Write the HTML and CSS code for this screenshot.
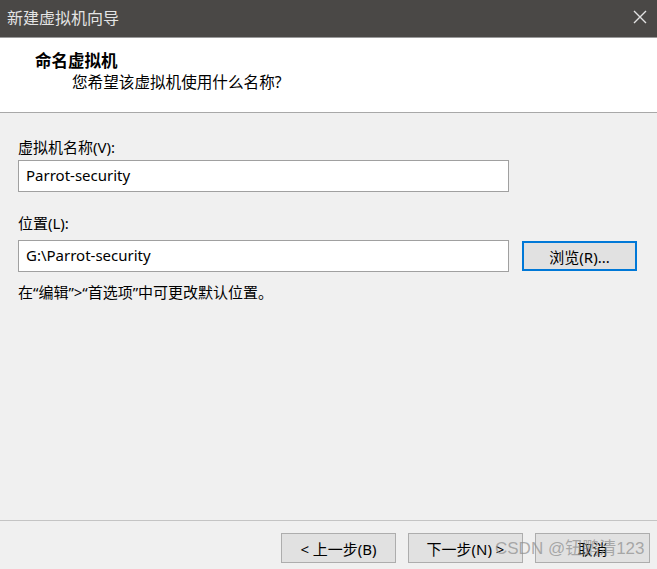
FILE: index.html
```html
<!DOCTYPE html>
<html lang="zh-CN">
<head>
<meta charset="utf-8">
<title>新建虚拟机向导</title>
<link rel="stylesheet" href="styles.css">
</head>
<body>
<div class="window">
  <div class="titlebar">
    <span class="title">新建虚拟机向导</span>
    <svg class="close" width="14" height="14" viewBox="0 0 14 14"><path d="M1 1 L13 13 M13 1 L1 13" stroke="#e2e2e2" stroke-width="1.4" fill="none"/></svg>
  </div>
  <div class="header">
    <div class="h-title">命名虚拟机</div>
    <div class="h-sub">您希望该虚拟机使用什么名称?</div>
  </div>
  <div class="main">
    <div class="label">虚拟机名称(V):</div>
    <div class="row">
      <div class="input">Parrot-security</div>
    </div>
    <div class="label label2">位置(L):</div>
    <div class="row">
      <div class="input">G:\Parrot-security</div>
      <div class="btn browse">浏览(R)...</div>
    </div>
    <div class="note">在“编辑”&gt;“首选项”中可更改默认位置。</div>
  </div>
  <div class="footer">
    <div class="btn">&lt; 上一步(B)</div>
    <div class="btn">下一步(N) &gt;</div>
    <div class="btn">取消</div>
  </div>
  <div class="watermark">CSDN @钮鹏清123</div>
</div>
</body>
</html>
```
FILE: styles.css
```css
* { box-sizing: border-box; }
html, body { margin: 0; padding: 0; }
body {
  width: 657px;
  height: 569px;
  overflow: hidden;
  background: #f0f0f0;
  font-family: "Noto Sans", "Noto Sans CJK SC", sans-serif;
  color: #000;
}
.window {
  position: relative;
  display: flex;
  flex-direction: column;
  height: 569px;
}
.titlebar {
  height: 38px;
  background: #4a4846;
  display: flex;
  align-items: center;
  justify-content: space-between;
  padding: 0 10px 0 7px;
  color: #e4e4e4;
  font-size: 16px;
  border-bottom: 1px solid #9a9a9a;
}
.title { line-height: 20px; margin-top: -2px; }
.close { margin-top: -3px; }
.header {
  height: 75px;
  background: #fff;
  border-bottom: 1px solid #a8a8a8;
  padding: 13px 0 0 35px;
}
.h-title {
  font-size: 16.5px;
  font-weight: bold;
  line-height: 20px;
}
.h-sub {
  font-size: 15.6px;
  line-height: 22px;
  padding-left: 37px;
}
.main {
  flex: 1;
  padding: 24px 0 0 18px;
  font-size: 15px;
}
.label { line-height: 20px; margin-bottom: 3px; }
.label2 { margin-top: 21px; margin-bottom: 7px; }
.row { display: flex; align-items: center; gap: 13px; }
.input {
  width: 491px;
  height: 32px;
  background: #fff;
  border: 1px solid #a0a0a0;
  padding: 0 7px;
  line-height: 29px;
}
.note { margin-top: 10px; line-height: 20px; }
.btn {
  width: 115px;
  height: 30px;
  background: #e1e1e1;
  border: 1px solid #adadad;
  display: flex;
  align-items: center;
  justify-content: center;
  font-size: 15px;
}
.browse {
  border: 2px solid #0078d7;
}
.footer {
  height: 49px;
  border-top: 1px solid #c4c4c4;
  display: flex;
  justify-content: flex-end;
  gap: 12px;
  padding: 12px 7px 0 0;
}
.watermark {
  position: absolute;
  left: 495px;
  top: 538px;
  font-family: "Liberation Sans", "Noto Sans CJK SC", sans-serif;
  font-size: 17px;
  line-height: 22px;
  color: rgba(140, 140, 140, 0.7);
  white-space: nowrap;
}
```
